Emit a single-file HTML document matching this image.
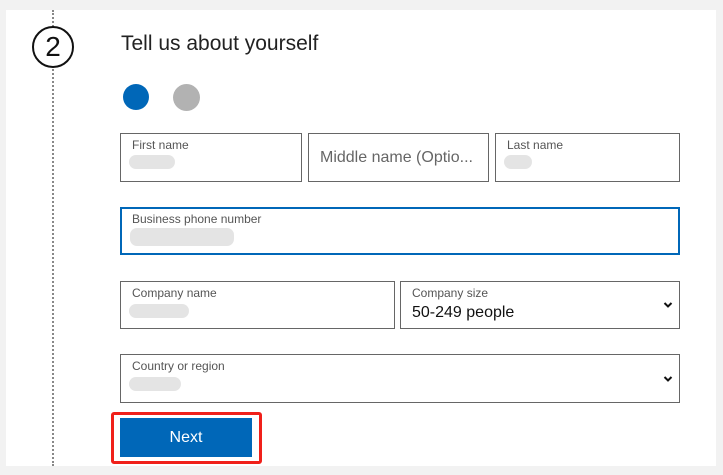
<!DOCTYPE html><html><head><style>
body{margin:0;width:723px;height:475px;background:#f2f2f2;font-family:"Liberation Sans",sans-serif;position:relative;overflow:hidden}
.card{position:absolute;left:6px;top:10px;width:710px;height:456px;background:#fff}
.a{position:absolute;box-sizing:border-box}
.f{border:1px solid #666;background:#fff}
.lb{position:absolute;left:11px;top:4px;font-size:12px;color:#555}
.blur{position:absolute;left:8px;height:14px;background:#ddd;border-radius:7px;opacity:.8}
.chev{position:absolute;right:6px;width:10px;height:8px}
</style></head><body>
<div class="card"></div>
<div class="a" style="left:52px;top:10px;height:456px;border-left:2px dotted #888"></div>
<div class="a" style="left:32px;top:26px;width:42px;height:42px;border:2px solid #111;border-radius:50%;background:#fff;text-align:center;line-height:38px;font-size:28px;color:#111">2</div>
<div class="a" style="left:121px;top:32px;font-size:21px;color:#222">Tell us about yourself</div>
<div class="a" style="left:123px;top:84px;width:26px;height:26px;border-radius:50%;background:#0067b8"></div>
<div class="a" style="left:173px;top:84px;width:27px;height:27px;border-radius:50%;background:#b2b2b2"></div>
<div class="a f" style="left:120px;top:133px;width:182px;height:49px"><div class="lb">First name</div><div class="blur" style="top:21px;width:46px"></div></div>
<div class="a f" style="left:308px;top:133px;width:181px;height:49px"><div style="position:absolute;left:11px;top:15px;font-size:16px;color:#666">Middle name (Optio...</div></div>
<div class="a f" style="left:495px;top:133px;width:185px;height:49px"><div class="lb">Last name</div><div class="blur" style="top:21px;width:28px"></div></div>
<div class="a" style="left:120px;top:207px;width:560px;height:48px;border:2px solid #0067b8"><div class="lb" style="left:10px;top:3px">Business phone number</div><div class="blur" style="top:19px;width:104px;height:18px"></div></div>
<div class="a f" style="left:120px;top:281px;width:275px;height:48px"><div class="lb">Company name</div><div class="blur" style="top:22px;width:60px"></div></div>
<div class="a f" style="left:400px;top:281px;width:280px;height:48px"><div class="lb">Company size</div><div style="position:absolute;left:11px;top:22px;font-size:16px;color:#111">50-249 people</div><svg class="chev" style="top:19px" viewBox="0 0 10 8"><path d="M1.5 2 L5 5.5 L8.5 2" fill="none" stroke="#111" stroke-width="2"/></svg></div>
<div class="a f" style="left:400px;top:281px;width:0;height:0;border:0"></div>
<div class="a f" style="left:120px;top:354px;width:560px;height:49px"><div class="lb">Country or region</div><div class="blur" style="top:22px;width:52px"></div><svg class="chev" style="top:20px" viewBox="0 0 10 8"><path d="M1.5 2 L5 5.5 L8.5 2" fill="none" stroke="#111" stroke-width="2"/></svg></div>
<div class="a" style="left:111px;top:412px;width:151px;height:52px;border:3px solid #f0201a;border-radius:3px"></div>
<div class="a" style="left:120px;top:418px;width:132px;height:39px;background:#0067b8;color:#fff;font-size:16px;text-align:center;line-height:39px">Next</div>
</body></html>
